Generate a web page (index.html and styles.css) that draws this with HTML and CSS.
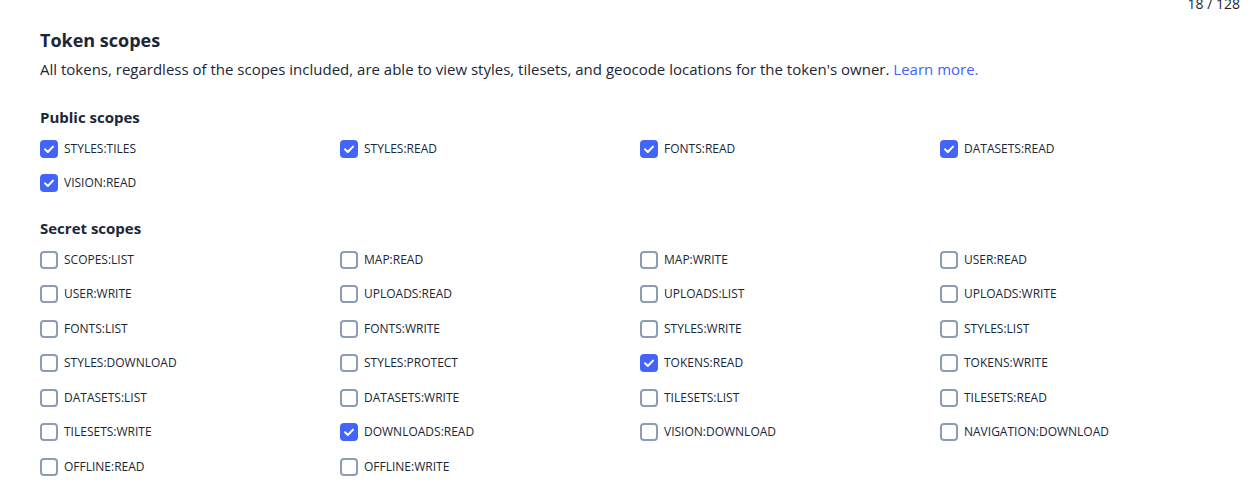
FILE: index.html
```html
<!DOCTYPE html>
<html>
<head>
<meta charset="utf-8">
<link rel="stylesheet" href="styles.css">
</head>
<body>
<div class="page">
  <div class="counter">18 / 128</div>
  <h2 class="title">Token scopes</h2>
  <p class="desc">All tokens, regardless of the scopes included, are able to view styles, tilesets, and geocode locations for the token's owner. <a class="link" href="#">Learn more.</a></p>

  <h3 class="group-title">Public scopes</h3>
  <div class="grid public">
    <label class="item"><span class="box on"><svg viewBox="0 0 18 18"><path d="M5 9.2l2.8 2.8L13 6.6"/></svg></span><span class="lbl">STYLES:TILES</span></label>
    <label class="item"><span class="box on"><svg viewBox="0 0 18 18"><path d="M5 9.2l2.8 2.8L13 6.6"/></svg></span><span class="lbl">STYLES:READ</span></label>
    <label class="item"><span class="box on"><svg viewBox="0 0 18 18"><path d="M5 9.2l2.8 2.8L13 6.6"/></svg></span><span class="lbl">FONTS:READ</span></label>
    <label class="item"><span class="box on"><svg viewBox="0 0 18 18"><path d="M5 9.2l2.8 2.8L13 6.6"/></svg></span><span class="lbl">DATASETS:READ</span></label>
    <label class="item"><span class="box on"><svg viewBox="0 0 18 18"><path d="M5 9.2l2.8 2.8L13 6.6"/></svg></span><span class="lbl">VISION:READ</span></label>
  </div>

  <h3 class="group-title second">Secret scopes</h3>
  <div class="grid">
    <label class="item"><span class="box"></span><span class="lbl">SCOPES:LIST</span></label>
    <label class="item"><span class="box"></span><span class="lbl">MAP:READ</span></label>
    <label class="item"><span class="box"></span><span class="lbl">MAP:WRITE</span></label>
    <label class="item"><span class="box"></span><span class="lbl">USER:READ</span></label>
    <label class="item"><span class="box"></span><span class="lbl">USER:WRITE</span></label>
    <label class="item"><span class="box"></span><span class="lbl">UPLOADS:READ</span></label>
    <label class="item"><span class="box"></span><span class="lbl">UPLOADS:LIST</span></label>
    <label class="item"><span class="box"></span><span class="lbl">UPLOADS:WRITE</span></label>
    <label class="item"><span class="box"></span><span class="lbl">FONTS:LIST</span></label>
    <label class="item"><span class="box"></span><span class="lbl">FONTS:WRITE</span></label>
    <label class="item"><span class="box"></span><span class="lbl">STYLES:WRITE</span></label>
    <label class="item"><span class="box"></span><span class="lbl">STYLES:LIST</span></label>
    <label class="item"><span class="box"></span><span class="lbl">STYLES:DOWNLOAD</span></label>
    <label class="item"><span class="box"></span><span class="lbl">STYLES:PROTECT</span></label>
    <label class="item"><span class="box on"><svg viewBox="0 0 18 18"><path d="M5 9.2l2.8 2.8L13 6.6"/></svg></span><span class="lbl">TOKENS:READ</span></label>
    <label class="item"><span class="box"></span><span class="lbl">TOKENS:WRITE</span></label>
    <label class="item"><span class="box"></span><span class="lbl">DATASETS:LIST</span></label>
    <label class="item"><span class="box"></span><span class="lbl">DATASETS:WRITE</span></label>
    <label class="item"><span class="box"></span><span class="lbl">TILESETS:LIST</span></label>
    <label class="item"><span class="box"></span><span class="lbl">TILESETS:READ</span></label>
    <label class="item"><span class="box"></span><span class="lbl">TILESETS:WRITE</span></label>
    <label class="item"><span class="box on"><svg viewBox="0 0 18 18"><path d="M5 9.2l2.8 2.8L13 6.6"/></svg></span><span class="lbl">DOWNLOADS:READ</span></label>
    <label class="item"><span class="box"></span><span class="lbl">VISION:DOWNLOAD</span></label>
    <label class="item"><span class="box"></span><span class="lbl">NAVIGATION:DOWNLOAD</span></label>
    <label class="item"><span class="box"></span><span class="lbl">OFFLINE:READ</span></label>
    <label class="item"><span class="box"></span><span class="lbl">OFFLINE:WRITE</span></label>
  </div>
</div>
</body>
</html>
```
FILE: styles.css
```css
* { box-sizing: border-box; }
html, body { margin: 0; padding: 0; background: #fff; }
body {
  font-family: "Open Sans", "Liberation Sans", sans-serif;
  color: #1b2736;
}
.page {
  padding: 0 11px 0 40px;
}
.counter {
  margin-top: -6px;
  height: 20px;
  line-height: 20px;
  font-size: 14px;
  text-align: right;
}
.title {
  margin: 14px 0 0;
  font-size: 18px;
  line-height: 24px;
  font-weight: 700;
}
.desc {
  margin: 7px 0 0;
  font-size: 15px;
  line-height: 20px;
}
.link {
  color: #3f63fb;
  text-decoration: none;
}
.group-title {
  margin: 28px 0 0;
  font-size: 15px;
  line-height: 20px;
  font-weight: 700;
}
.group-title.second {
  margin-top: 22.5px;
}
.grid {
  margin-top: 10px;
  display: grid;
  grid-template-columns: repeat(4, 300px);
  grid-auto-rows: 24px;
  row-gap: 10.5px;
}
.grid.public {
  row-gap: 10px;
}
.item {
  display: flex;
  align-items: center;
  gap: 6px;
  height: 24px;
}
.box {
  width: 18px;
  height: 18px;
  border: 2px solid #8c9cb4;
  border-radius: 4px;
  flex: none;
  display: flex;
  align-items: center;
  justify-content: center;
}
.box.on {
  background: #4264fb;
  border-color: #4264fb;
}
.box svg {
  width: 18px;
  height: 18px;
  flex: none;
}
.box svg path {
  fill: none;
  stroke: #fff;
  stroke-width: 2;
  stroke-linecap: round;
  stroke-linejoin: round;
}
.lbl {
  font-size: 12px;
  line-height: 16px;
}
```
